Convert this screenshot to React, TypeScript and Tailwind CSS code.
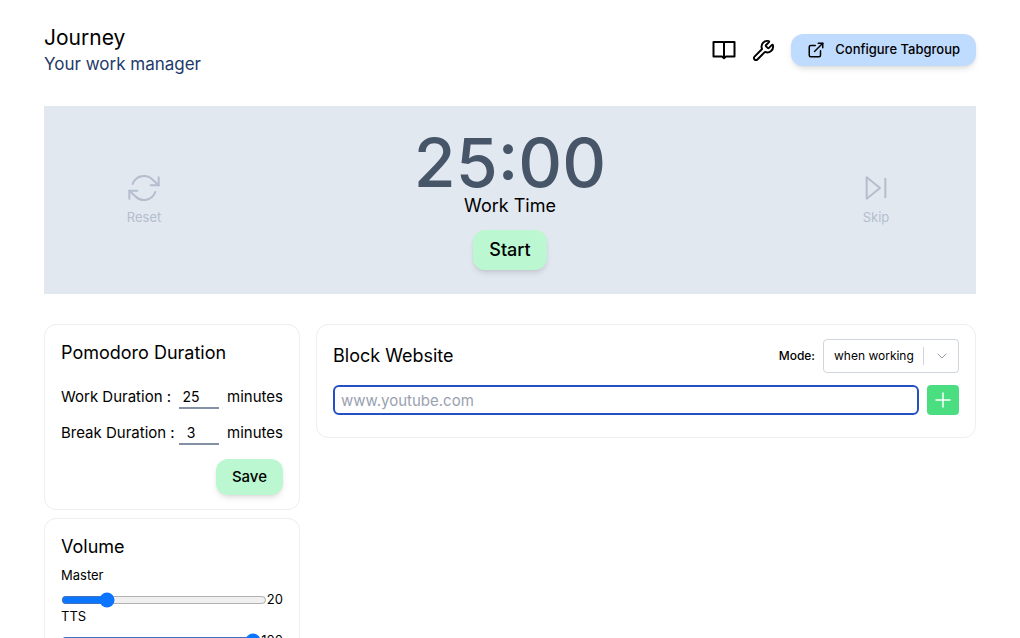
import { useState } from "react";
import { Wrench } from "lucide-react";
import { FiChevronDown, FiExternalLink, FiPlus, FiRefreshCw, FiSkipForward } from "react-icons/fi";

const BookIcon = () => {
    return (
        <svg width="24" height="20" viewBox="0 0 24 20" fill="none" stroke="currentColor" strokeWidth="2" strokeLinejoin="round" aria-hidden="true">
            <path d="M12 2.8 11 2H1.5v14.5H10l2 1.6 2-1.6h8.5V2H13l-1 .8v15" />
        </svg>
    );
};

const Header = () => {
    return (
        <header className="flex items-start justify-between">
            <div>
                <h1 className="text-[21px] leading-7">Journey</h1>
                <p className="text-[17px] leading-6 text-[#1e3a6b]">Your work manager</p>
            </div>
            <div className="flex items-center gap-4 pt-2.5">
                <button aria-label="Guide">
                    <BookIcon />
                </button>
                <button aria-label="Settings">
                    <Wrench size={23} strokeWidth={2} />
                </button>
                <button className="flex h-8 items-center gap-2.5 rounded-xl bg-[#bfdbfe] px-4 text-[13px] font-medium shadow-md">
                    <FiExternalLink size={18} />
                    Configure Tabgroup
                </button>
            </div>
        </header>
    );
};

const Timer = () => {
    return (
        <section className="mt-7.5 grid grid-cols-[200px_1fr_200px] items-center bg-[#e2e8f0] py-6">
            <button className="flex flex-col items-center gap-1 justify-self-center text-[13px] text-[#b4becd]">
                <FiRefreshCw size={32} strokeWidth={1.5} />
                Reset
            </button>
            <div className="flex flex-col items-center">
                <div className="text-[68px] leading-16 font-medium text-[#475569]">25:00</div>
                <p className="text-lg leading-6">Work Time</p>
                <button className="mt-3 h-10 rounded-xl bg-[#bbf7d0] px-4 text-lg font-medium shadow-md">Start</button>
            </div>
            <button className="flex flex-col items-center gap-1 justify-self-center text-[13px] text-[#b4becd]">
                <FiSkipForward size={32} strokeWidth={1.5} />
                Skip
            </button>
        </section>
    );
};

type DurationProps = {
    id: string;
    label: string;
    value: string;
    onChange: (value: string) => void;
};

const DurationRow = ({ id, label, value, onChange }: DurationProps) => {
    return (
        <div className="flex h-6 items-center justify-between text-[15px]">
            <label htmlFor={id}>{label} :</label>
            <div className="flex items-center gap-2">
                <input
                    id={id}
                    className="h-6 w-10 border-b-2 border-[#8490a3] pr-4 text-center text-sm outline-none"
                    value={value}
                    onChange={(e) => onChange(e.target.value)}
                />
                <span>minutes</span>
            </div>
        </div>
    );
};

const PomodoroDuration = () => {
    const [work, setWork] = useState("25");
    const [rest, setRest] = useState("3");

    return (
        <section className="rounded-xl border border-[#eceef1] px-4 pt-3 pb-3.5">
            <h2 className="text-lg leading-8">Pomodoro Duration</h2>
            <div className="mt-4 flex flex-col gap-3">
                <DurationRow id="work" label="Work Duration" value={work} onChange={setWork} />
                <DurationRow id="break" label="Break Duration" value={rest} onChange={setRest} />
            </div>
            <div className="mt-3.5 flex justify-end">
                <button className="h-9 rounded-xl bg-[#bbf7d0] px-4 text-[15px] font-medium shadow-md">Save</button>
            </div>
        </section>
    );
};

type VolumeProps = {
    id: string;
    label: string;
    initial: number;
};

const VolumeSlider = ({ id, label, initial }: VolumeProps) => {
    const [value, setValue] = useState(initial);

    return (
        <div>
            <label htmlFor={id} className="block text-[13px] leading-4">{label}</label>
            <div className="mt-2 flex h-[17px] items-center text-[13px]">
                <input
                    id={id}
                    type="range"
                    className="h-4 min-w-0 flex-1 accent-[#0b75ff]"
                    value={value}
                    onChange={(e) => setValue(Number(e.target.value))}
                />
                <span>{value}</span>
            </div>
        </div>
    );
};

const Volume = () => {
    return (
        <section className="rounded-xl border border-[#eceef1] px-4 py-3">
            <h2 className="mb-1 text-lg leading-8">Volume</h2>
            <VolumeSlider id="master" label="Master" initial={20} />
            <VolumeSlider id="tts" label="TTS" initial={100} />
        </section>
    );
};

const BlockWebsite = () => {
    const [site, setSite] = useState("");

    return (
        <section className="rounded-xl border border-[#eceef1] px-4 pt-3.5 pb-5.5">
            <div className="flex items-center justify-between">
                <h2 className="text-lg">Block Website</h2>
                <div className="flex items-center gap-2 text-xs">
                    <label htmlFor="mode" className="font-medium">Mode:</label>
                    <div className="relative">
                        <select id="mode" className="block h-8.5 w-34 appearance-none rounded border border-gray-300 bg-white px-2.5">
                            <option>when working</option>
                            <option>always</option>
                        </select>
                        <div className="pointer-events-none absolute inset-y-2 right-0 flex w-9 items-center justify-center border-l border-gray-300 text-gray-400">
                            <FiChevronDown size={16} strokeWidth={1.5} />
                        </div>
                    </div>
                </div>
            </div>
            <form className="mt-3 flex gap-2" onSubmit={(e) => e.preventDefault()}>
                <input
                    aria-label="Website"
                    placeholder="www.youtube.com"
                    className="h-7.5 min-w-0 flex-1 rounded-md border-2 border-[#2450c4] px-1.5 text-[15px] outline-none placeholder:text-gray-400"
                    value={site}
                    onChange={(e) => setSite(e.target.value)}
                />
                <button aria-label="Add" className="flex h-7.5 w-8 items-center justify-center rounded bg-[#4ade80] text-white">
                    <FiPlus size={24} strokeWidth={1.5} />
                </button>
            </form>
        </section>
    );
};

const App = () => {
    return (
        <div className="h-screen overflow-hidden bg-white px-11 pt-6 font-['Inter',sans-serif] text-black">
            <Header />
            <Timer />
            <main className="mt-7.5 grid grid-cols-[256px_1fr] items-start gap-4">
                <div className="flex flex-col gap-2">
                    <PomodoroDuration />
                    <Volume />
                </div>
                <BlockWebsite />
            </main>
        </div>
    );
};

export default App;
